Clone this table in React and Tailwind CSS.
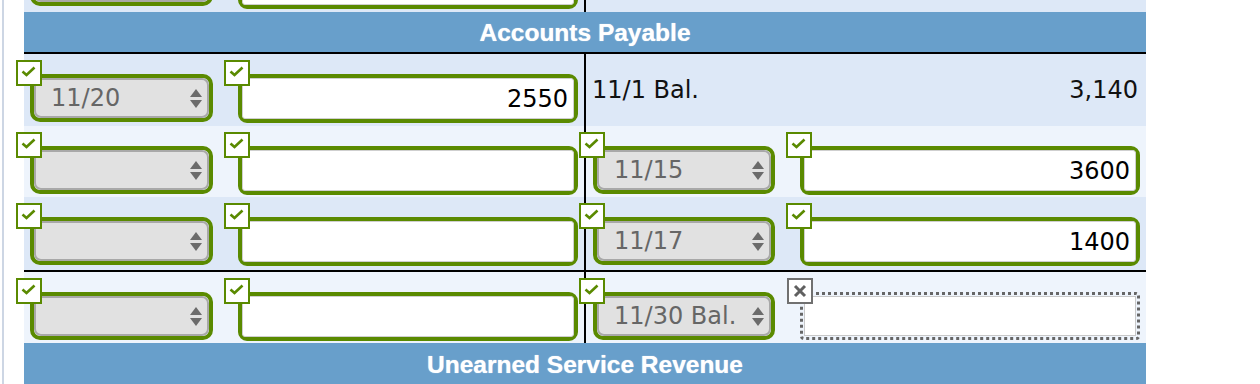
import React from "react";

function Check() {
  return (
    <div className="absolute left-[-14px] top-[-14px] z-10 flex h-[26px] w-[26px] items-center justify-center border-2 border-[#5a8a00] bg-white">
      <svg width="22" height="22" viewBox="0 0 22 22">
        <polyline points="4.5,9.5 8.5,13 16.5,5.5" fill="none" stroke="#5a8a00" strokeWidth="2.6" />
      </svg>
    </div>
  );
}

function Cross() {
  return (
    <div className="absolute left-[-13px] top-[-14px] z-10 flex h-[26px] w-[26px] items-center justify-center border-2 border-[#707070] bg-white">
      <svg width="22" height="22" viewBox="0 0 22 22">
        <path d="M6 6 L16 16 M16 6 L6 16" fill="none" stroke="#606060" strokeWidth="3" />
      </svg>
    </div>
  );
}

function DateSelect({ value = "", w = "w-[183px]", mark = true, className = "" }) {
  return (
    <div className={`relative h-[48px] shrink-0 ${w} ${className}`}>
      {mark && <Check />}
      <div className="h-full w-full rounded-[10px] border-4 border-[#5a8a00]">
        <div className="flex h-full w-full items-center rounded-[7px] border-2 border-[#a8a8a8] bg-[#e1e1e1] pl-[15px] pr-[5px] text-[24px] leading-none text-[#666]">
          <span className="flex-1 whitespace-nowrap">{value}</span>
          <svg width="12" height="21" viewBox="0 0 12 21" className="shrink-0">
            <path d="M0 9 L6 1 L12 9 Z M0 12 L12 12 L6 20 Z" fill="#6b6b6b" />
          </svg>
        </div>
      </div>
    </div>
  );
}

function Amount({ value = "", className = "" }) {
  return (
    <div className={`relative h-[49px] w-[340px] shrink-0 ${className}`}>
      <Check />
      <div className="h-full w-full rounded-[9px] border-4 border-[#5a8a00]">
        <div className="flex h-full w-full items-center justify-end rounded-[3px] border border-[#cfcfcf] bg-white pr-[5px] text-[24px] leading-none text-black">
          {value}
        </div>
      </div>
    </div>
  );
}

function EmptyAmount() {
  return (
    <div className="relative h-[48px] w-[340px] shrink-0">
      <Cross />
      <div className="h-full w-full rounded-[4px] border-[3px] border-dotted border-[#666] p-[1px]">
        <div className="h-full w-full border border-[#c8c8c8] bg-white" />
      </div>
    </div>
  );
}

function Divider() {
  return <div className="w-[2px] shrink-0 self-stretch bg-black" />;
}

function Row({ h, bg, left, right }) {
  return (
    <div className={`flex ${h} ${bg}`}>
      <div className="relative flex w-[560px] shrink-0 items-start gap-[25px] pl-[6px] pt-[20px]">{left}</div>
      <Divider />
      <div className="relative flex w-[560px] shrink-0 items-start gap-[25px] pl-[7px] pt-[20px]">{right}</div>
    </div>
  );
}

function Band({ title, h }) {
  return (
    <div className={`flex ${h} items-center justify-center bg-[#689fcb] font-['Liberation_Sans',sans-serif] text-[24.5px] font-bold text-white [text-shadow:0_0_1px_rgba(255,255,255,0.8)]`}>
      {title}
    </div>
  );
}

export default function App() {
  const dark = "bg-[#dde8f7]";
  const light = "bg-[#eef4fc]";
  return (
    <div className="flex h-[384px] w-[1260px] overflow-hidden bg-white font-['DejaVu_Sans',sans-serif]">
      <div className="ml-[2px] w-[2px] shrink-0 bg-[#cdd6e4]" />
      <div className="ml-[20px] flex w-[1122px] shrink-0 flex-col">
        {/* partial top row */}
        <div className={`flex h-[12px] shrink-0 overflow-hidden ${dark}`}>
          <div className="flex w-[560px] shrink-0 items-start gap-[25px] pl-[6px]">
            <DateSelect className="mt-[-42px]" mark={false} />
            <div className="mt-[-40px]">
              <div className="h-[49px] w-[340px] rounded-[9px] border-4 border-[#5a8a00]">
                <div className="h-full w-full rounded-[3px] border border-[#cfcfcf] bg-white" />
              </div>
            </div>
          </div>
          <Divider />
          <div className="w-[560px] shrink-0" />
        </div>

        <Band title="Accounts Payable" h="h-[40px] shrink-0 pt-[2px]" />
        <div className="h-[2px] shrink-0 bg-black" />

        <div className={`flex h-[72px] shrink-0 ${dark}`}>
          <div className="relative flex w-[560px] shrink-0 items-start gap-[25px] pl-[6px] pt-[20px]">
            <DateSelect value="11/20" />
            <Amount value="2550" />
          </div>
          <Divider />
          <div className="flex w-[560px] shrink-0 items-center justify-between pb-[1px] pl-[6px] pr-[8px] text-[24px] leading-none text-[#111]">
            <span>11/1 Bal.</span>
            <span>3,140</span>
          </div>
        </div>

        <Row
          h="h-[71px] shrink-0"
          bg={light}
          left={<><DateSelect /><Amount /></>}
          right={<><DateSelect value="11/15" w="w-[182px]" /><Amount value="3600" /></>}
        />
        <Row
          h="h-[73px] shrink-0"
          bg={dark}
          left={<><DateSelect /><Amount /></>}
          right={<><DateSelect value="11/17" w="w-[182px]" /><Amount value="1400" /></>}
        />
        <div className="h-[2px] shrink-0 bg-black" />
        <Row
          h="h-[71px] shrink-0"
          bg={light}
          left={<><DateSelect /><Amount /></>}
          right={<><DateSelect value="11/30 Bal." w="w-[182px]" /><EmptyAmount /></>}
        />

        <Band title="Unearned Service Revenue" h="h-[41px] shrink-0 pt-[4px]" />
      </div>
    </div>
  );
}
